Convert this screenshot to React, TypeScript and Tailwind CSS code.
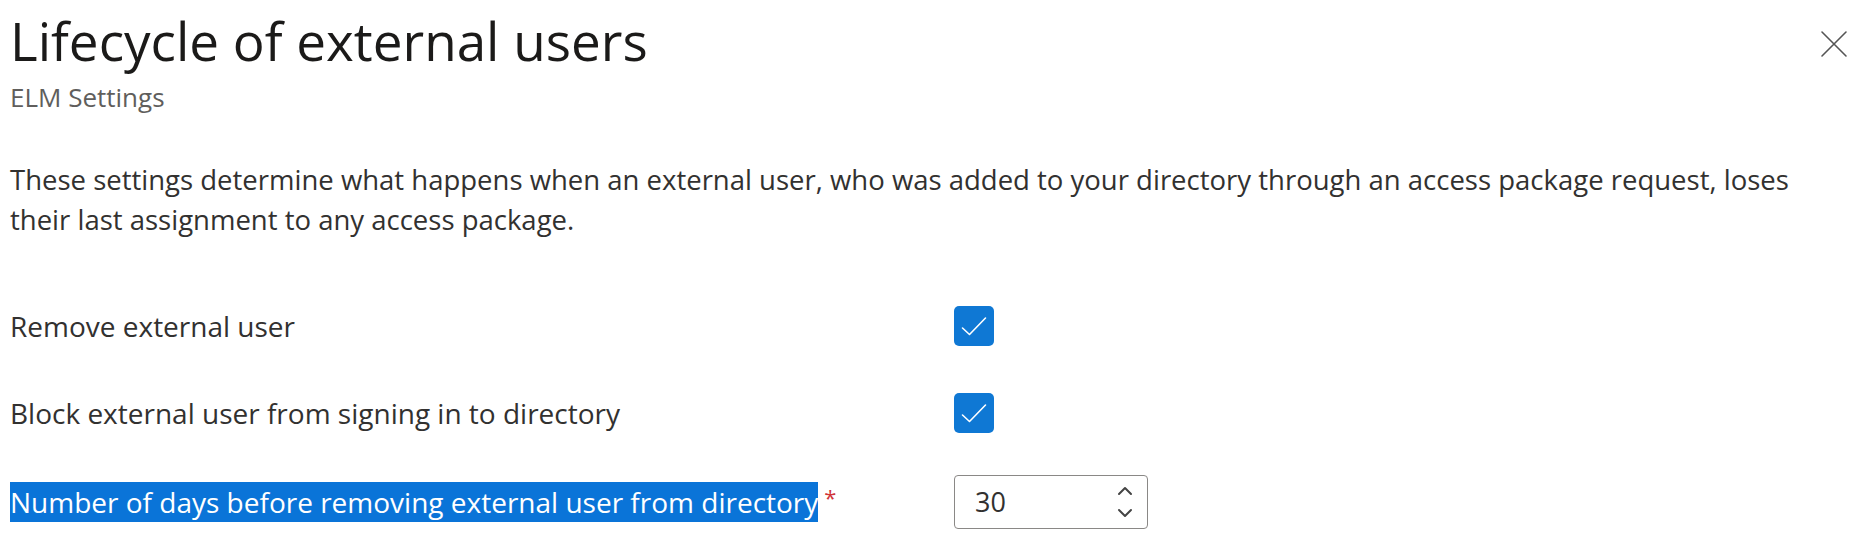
import React from "react";

function Check() {
  return (
    <div className="w-[40px] h-[40px] rounded-[5px] bg-[#0f78d4] flex items-center justify-center">
      <svg width="40" height="40" viewBox="0 0 40 40" fill="none">
        <path d="M8.5 22 L15.5 28.5 L31.5 12" stroke="#fff" strokeWidth="1.6" strokeLinecap="round" strokeLinejoin="round" />
      </svg>
    </div>
  );
}

export default function App() {
  return (
    <div className="w-[1852px] h-[535px] bg-white overflow-hidden text-[#323130]" style={{ fontFamily: '"Open Sans", "Noto Sans", sans-serif' }}>
      <div className="flex justify-between pl-[10px] pr-[4px] pt-[10px]">
        <div>
          <h1 className="text-[53px] leading-[62px] text-[#1b1a19]">Lifecycle of external users</h1>
          <div className="text-[26px] leading-[34px] text-[#605e5c] mt-[8px]">ELM Settings</div>
        </div>
        <svg className="mt-[20px]" width="28" height="28" viewBox="0 0 28 28" fill="none">
          <path d="M2 2 L26 26 M26 2 L2 26" stroke="#555" strokeWidth="1.6" strokeLinecap="round" />
        </svg>
      </div>
      <p className="pl-[10px] w-[1835px] mt-[46px] text-[27.5px] leading-[40px] text-[#323130]">
        These settings determine what happens when an external user, who was added to your directory through an access package request, loses their last assignment to any access package.
      </p>
      <div className="pl-[10px] mt-[66px] flex flex-col">
        <div className="flex items-center h-[40px]">
          <div className="w-[944px] text-[28px] leading-[40px]">Remove external user</div>
          <Check />
        </div>
        <div className="flex items-center h-[40px] mt-[47px]">
          <div className="w-[944px] text-[28px] leading-[40px]">Block external user from signing in to directory</div>
          <Check />
        </div>
        <div className="flex items-center h-[54px] mt-[42px]">
          <div className="w-[944px] text-[28px] leading-[40px] flex items-start">
            <span className="bg-[#0a74d8] text-white">Number of days before removing external user from directory</span>
            <span className="text-[#d13438] text-[22px] leading-[30px] ml-[6px]">*</span>
          </div>
          <div className="w-[194px] h-[54px] border-[1.5px] border-[#8a8886] rounded-[4px] flex items-center justify-between pl-[20px] pr-[14px]">
            <span className="text-[27px] text-[#323130]">30</span>
            <div className="flex flex-col gap-[12px]">
              <svg width="16" height="10" viewBox="0 0 16 10" fill="none"><path d="M2 8 L8 2 L14 8" stroke="#444" strokeWidth="2" strokeLinecap="round" strokeLinejoin="round" /></svg>
              <svg width="16" height="10" viewBox="0 0 16 10" fill="none"><path d="M2 2 L8 8 L14 2" stroke="#444" strokeWidth="2" strokeLinecap="round" strokeLinejoin="round" /></svg>
            </div>
          </div>
        </div>
      </div>
    </div>
  );
}
